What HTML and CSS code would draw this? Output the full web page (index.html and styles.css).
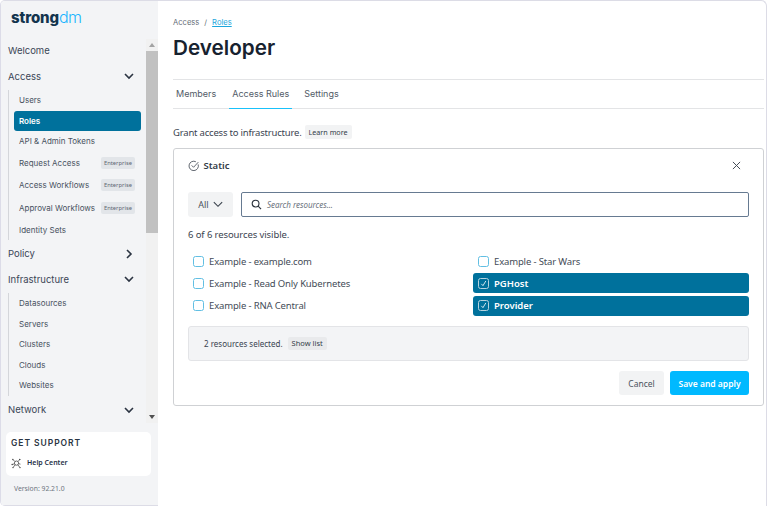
FILE: index.html
```html
<!DOCTYPE html>
<html lang="en">
<head>
<meta charset="utf-8">
<title>Developer</title>
<link rel="stylesheet" href="styles.css">
</head>
<body>
<div class="app">
  <aside class="sidebar">
    <div class="logo"><span class="logo-a">strong</span><span class="logo-b">dm</span></div>
    <div class="navwrap">
      <nav class="nav">
        <a class="top top-first">Welcome</a>
        <a class="top">Access<svg class="chev" viewBox="0 0 12 12"><path d="M2 4l4 4 4-4"/></svg></a>
        <div class="sub">
          <a class="item">Users</a>
          <a class="item active">Roles</a>
          <a class="item">API &amp; Admin Tokens</a>
          <a class="item item-req">Request Access<span class="ent">Enterprise</span></a>
          <a class="item item-ent">Access Workflows<span class="ent">Enterprise</span></a>
          <a class="item item-ent">Approval Workflows<span class="ent">Enterprise</span></a>
          <a class="item">Identity Sets</a>
        </div>
        <a class="top top-short">Policy<svg class="chev" viewBox="0 0 12 12"><path d="M4 2l4 4-4 4"/></svg></a>
        <a class="top">Infrastructure<svg class="chev" viewBox="0 0 12 12"><path d="M2 4l4 4 4-4"/></svg></a>
        <div class="sub">
          <a class="item">Datasources</a>
          <a class="item">Servers</a>
          <a class="item">Clusters</a>
          <a class="item">Clouds</a>
          <a class="item">Websites</a>
        </div>
        <a class="top">Network<svg class="chev" viewBox="0 0 12 12"><path d="M2 4l4 4 4-4"/></svg></a>
      </nav>
      <div class="scrollbar">
        <span class="arrow-up"></span>
        <span class="thumb"></span>
        <span class="arrow-down"></span>
      </div>
    </div>
    <div class="support">
      <div class="support-title">GET SUPPORT</div>
      <a class="help">
        <svg class="help-icon" viewBox="0 0 14 14"><circle cx="7" cy="6.5" r="2.7"/><path d="M5 4.5L3 2.5M9.2 4.4l1.6-2.2M4.4 7.4L2.2 8M9.7 7.2l2.3.6M5.3 8.7L3 11.6M8.7 8.7l2.3 2.9"/><circle class="dot" cx="2.4" cy="2" r="0.9"/><circle class="dot" cx="11.2" cy="1.8" r="0.9"/><circle class="dot" cx="1.5" cy="8.2" r="0.9"/><circle class="dot" cx="2.6" cy="12.2" r="0.9"/><circle class="dot" cx="11.4" cy="12.2" r="0.9"/></svg>
        Help Center
      </a>
    </div>
    <div class="version">Version: 92.21.0</div>
  </aside>
  <main class="main">
    <div class="crumbs"><span>Access</span><span class="sep">/</span><a class="crumb-link">Roles</a></div>
    <h1 class="title">Developer</h1>
    <div class="tabs">
      <a class="tab tab-first">Members</a>
      <a class="tab tab-on">Access Rules</a>
      <a class="tab">Settings</a>
    </div>
    <div class="grant">Grant access to infrastructure.<span class="chip chip-learn">Learn more</span></div>
    <section class="card">
      <header class="card-head">
        <div class="card-name">
          <svg class="static-icon" viewBox="0 0 12 12"><path d="M10.6 4.6A4.9 4.9 0 1 1 8.2 1.8"/><path d="M3.8 5.6l2 2L10.8 2.2"/></svg>
          Static
        </div>
        <svg class="close" viewBox="0 0 10 10"><path d="M1 1l8 8M9 1l-8 8"/></svg>
      </header>
      <div class="filter">
        <div class="select">All<svg class="sel-chev" viewBox="0 0 12 8"><path d="M1 1.2l5 5 5-5"/></svg></div>
        <div class="search">
          <svg class="search-icon" viewBox="0 0 12 12"><circle cx="5" cy="5" r="3.7"/><path d="M7.8 7.8L11 11"/></svg>
          <span class="placeholder">Search resources...</span>
        </div>
      </div>
      <p class="count">6 of 6 resources visible.</p>
      <div class="resources">
        <label class="res"><span class="box"></span>Example - example.com</label>
        <label class="res"><span class="box"></span>Example - Star Wars</label>
        <label class="res"><span class="box"></span>Example - Read Only Kubernetes</label>
        <label class="res res-on"><span class="box box-on"><svg viewBox="0 0 10 10"><path d="M2.6 5.4l1.8 2L7.6 2.2"/></svg></span>PGHost</label>
        <label class="res"><span class="box"></span>Example - RNA Central</label>
        <label class="res res-on"><span class="box box-on"><svg viewBox="0 0 10 10"><path d="M2.6 5.4l1.8 2L7.6 2.2"/></svg></span>Provider</label>
      </div>
      <div class="selected">2 resources selected.<span class="chip chip-show">Show list</span></div>
      <div class="actions">
        <button class="btn btn-cancel">Cancel</button>
        <button class="btn btn-save">Save and apply</button>
      </div>
    </section>
  </main>
</div>
</body>
</html>
```
FILE: styles.css
```css
* { box-sizing: border-box; }
html, body { margin: 0; height: 100%; background: #fff; }
body { width: 768px; height: 506px; overflow: hidden; font-family: "Noto Sans", "Open Sans", sans-serif; color: #333c48; }
.app { display: flex; width: 767px; height: 506px; border-top: 1px solid #dcdce6; border-right: 1px solid #dcdce6; border-left: 1px solid #dcdce8; border-radius: 5px 6px 0 5px; overflow: hidden; }
.sidebar { width: 157px; flex: none; height: 505px; background: #f3f4f6; border-bottom: 1px solid #dcdce6; display: flex; flex-direction: column; font-family: "Inter", "Noto Sans", sans-serif; }
.logo { height: 38px; padding: 5px 0 0 10px; font-size: 15px; font-weight: 800; line-height: 22px; letter-spacing: -0.1px; }
.logo-a { color: #13344e; }
.logo-b { color: #19b5fe; font-weight: 300; font-size: 16px; letter-spacing: -0.6px; }
.navwrap { display: flex; height: 384px; flex: none; }
.nav { width: 145px; flex: none; display: flex; flex-direction: column; }
.scrollbar { width: 12px; flex: none; background: #f1f1f1; display: flex; flex-direction: column; align-items: center; }
.arrow-up { margin-top: 4px; width: 0; height: 0; border: 3px solid transparent; border-top: 0; border-bottom: 4px solid #a3a3a3; }
.thumb { width: 100%; height: 182px; margin-top: 4px; background: #c1c1c1; flex: none; }
.arrow-down { margin-top: auto; margin-bottom: 4px; width: 0; height: 0; border: 3px solid transparent; border-bottom: 0; border-top: 4px solid #505050; }
.top { display: flex; justify-content: space-between; align-items: center; flex: none; height: 26px; padding: 0 11px 0 7px; font-size: 9.5px; color: #3b4656; }
.top-first { margin-top: -2px; }
.top-short { height: 25px; }
.chev { width: 12px; height: 12px; fill: none; stroke: #2b3442; stroke-width: 1.6; }
.sub { margin: 1px 0 1px 7px; border-left: 1px solid #d4d6da; padding: 0 5px; display: flex; flex-direction: column; flex: none; }
.item { display: flex; justify-content: space-between; align-items: center; height: 20.5px; flex: none; padding: 0 6px 0 5px; font-size: 8px; color: #48525f; white-space: nowrap; }
.item-req { height: 22px; }
.item-ent { height: 23px; }
.item.active { background: #00719c; color: #fff; font-weight: 600; border-radius: 3px; }
.ent { font-family: "Noto Sans", sans-serif; background: #e2e5e9; color: #5e6772; font-size: 5.8px; line-height: 12px; padding: 0 3px; border-radius: 2px; }
.support { margin: 9px 7px 0 5px; height: 44px; flex: none; background: #fff; border-radius: 5px; padding: 5px 5px; }
.support-title { font-size: 8.5px; font-weight: 600; letter-spacing: 0.95px; color: #2a3442; line-height: 12px; }
.help { display: flex; align-items: center; gap: 5px; margin-top: 8px; font-family: "Noto Sans", sans-serif; font-size: 7px; font-weight: 600; color: #1f3147; line-height: 12px; }
.help-icon { width: 11px; height: 11px; fill: none; stroke: #333; stroke-width: 0.9; }
.help-icon .dot { fill: #333; stroke: none; }
.version { padding: 7px 0 0 13px; font-family: "Noto Sans", sans-serif; font-size: 6.8px; line-height: 12px; color: #6d7580; }
.main { flex: 1; padding: 0 2px 0 15px; min-width: 0; }
.crumbs { display: flex; gap: 5px; padding-top: 16px; font-size: 7.6px; line-height: 12px; color: #666e78; font-family: "Inter", sans-serif; }
.crumb-link { color: #1ba6dc; text-decoration: underline; }
.title { margin: 6px 0 0; font-family: "Inter", sans-serif; font-weight: 600; font-size: 20.7px; line-height: 26px; color: #17222f; }
.tabs { margin-top: 18px; height: 30px; border-top: 1px solid #e3e4e6; border-bottom: 1px solid #e3e4e6; display: flex; font-family: "Inter", sans-serif; }
.tab { padding: 0 3px; margin-right: 9px; font-size: 9px; line-height: 28px; color: #525b67; height: 29px; }
.tab-first { margin-right: 10px; }
.tab-on { border-bottom: 1px solid #19c1fa; }
.grant { display: flex; align-items: center; gap: 3px; margin-top: 16px; height: 14px; font-size: 9.5px; letter-spacing: -0.2px; color: #3a4350; }
.chip { background: #f2f3f4; border-radius: 2px; color: #333c48; display: inline-block; letter-spacing: 0; }
.chip-learn { font-size: 7.2px; line-height: 14px; padding: 0 4px; }
.card { margin-top: 9px; height: 258px; border: 1px solid #cfd1d4; border-radius: 3px; padding: 0 0 0 14px; }
.card-head { display: flex; justify-content: space-between; align-items: center; height: 33px; padding-right: 22px; }
.card-name { display: flex; align-items: center; gap: 4px; font-size: 9.5px; font-weight: 600; color: #333c48; }
.static-icon { width: 11.5px; height: 11.5px; fill: none; stroke: #4a525c; stroke-width: 0.9; }
.close { width: 9px; height: 9px; fill: none; stroke: #444c56; stroke-width: 1.1; }
.filter { display: flex; gap: 8px; margin-top: 10px; height: 25px; width: 561px; }
.select { width: 45px; flex: none; background: #f2f3f4; border-radius: 3px; display: flex; align-items: center; justify-content: center; gap: 4px; font-size: 9px; color: #4a525c; }
.sel-chev { width: 10px; height: 7px; fill: none; stroke: #39414b; stroke-width: 1.3; }
.search { flex: 1; border: 1px solid #667a91; border-radius: 2px; display: flex; align-items: center; padding-left: 9px; gap: 5px; }
.search-icon { width: 11px; height: 11px; fill: none; stroke: #2a323c; stroke-width: 1.2; }
.placeholder { font-size: 8px; font-style: italic; color: #6a727c; }
.count { margin: 11px 0 0; font-size: 9.5px; line-height: 13px; letter-spacing: -0.1px; color: #3a4350; }
.resources { display: grid; grid-template-columns: 285px 276px; grid-auto-rows: 22.4px; margin-top: 10px; width: 561px; }
.res { display: flex; align-items: center; gap: 5px; padding-left: 5px; font-size: 9.5px; letter-spacing: -0.15px; color: #444c57; height: 20px; }
.box { width: 11px; height: 11px; flex: none; border: 1.2px solid #62bfe3; border-radius: 2.5px; background: #fff; display: block; }
.res-on { background: #00719c; color: #fff; font-weight: 600; border-radius: 3px; letter-spacing: 0; }
.box-on { background: transparent; border: 1px solid #b5d3df; }
.box-on svg { display: block; width: 100%; height: 100%; fill: none; stroke: #fff; stroke-width: 0.9; }
.selected { margin-top: 8px; width: 561px; height: 35px; background: #f3f4f6; border: 1px solid #e3e4e7; border-radius: 3px; padding-left: 15px; display: flex; align-items: center; gap: 5px; font-size: 8px; color: #3a4350; }
.chip-show { background: #e9eaec; font-size: 7.5px; line-height: 13px; padding: 0 4px; }
.actions { display: flex; justify-content: flex-end; gap: 6px; width: 561px; margin-top: 10px; }
.btn { height: 24px; border: 0; border-radius: 3px; font-family: "Noto Sans", sans-serif; font-size: 8.5px; padding: 0; }
.btn-cancel { width: 45px; background: #f2f3f4; color: #4a525c; }
.btn-save { width: 79px; background: #00b9ff; color: #fff; font-weight: 600; }
```
